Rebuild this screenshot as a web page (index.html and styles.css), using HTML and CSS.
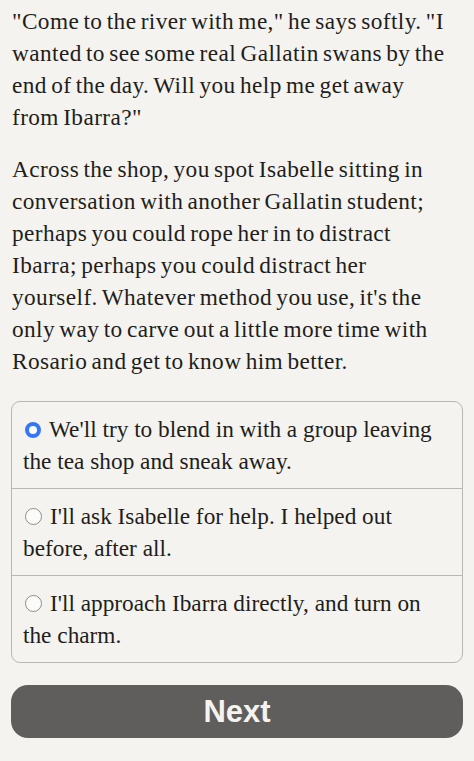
FILE: index.html
```html
<!DOCTYPE html>
<html lang="en">
<head>
    <meta charset="UTF-8">
    <meta name="viewport" content="width=device-width, initial-scale=1.0">
    <title>Gallatin</title>
    <link rel="stylesheet" href="styles.css">
</head>
<body>
    <div id="main">
        <!-- story text -->
        <div class="story">
            <p>"Come to the river with me," he says softly. "I wanted to see some real Gallatin swans by the end of the day. Will you help me get away from Ibarra?"</p>
            <p>Across the shop, you spot Isabelle sitting in conversation with another Gallatin student; perhaps you could rope her in to distract Ibarra; perhaps you could distract her yourself. Whatever method you use, it's the only way to carve out a little more time with Rosario and get to know him better.</p>
        </div>

        <!-- choices -->
        <ul class="choices">
            <li class="selected"><span class="radio"></span>We'll try to blend in with a group leaving the tea shop and sneak away.</li>
            <li><span class="radio"></span>I'll ask Isabelle for help. I helped out before, after all.</li>
            <li><span class="radio"></span>I'll approach Ibarra directly, and turn on the charm.</li>
        </ul>

        <button class="next">Next</button>
    </div>
</body>
</html>
```

FILE: styles.css
```css
*{
    margin: 0;
    padding: 0;
    list-style: none;
    box-sizing: border-box;
}

body{
    background-color: #f4f3ef;
    color: #1f1e1c;
    font-family: "Liberation Serif", "Times New Roman", serif;
}

#main{
    padding: 5px 11px 0;
}

.story{
    padding: 0 9px 0 1px;
}

.story p{
    font-size: 23.3px;
    line-height: 32px;
    letter-spacing: 0.4px;
    word-spacing: -1.9px;
    margin-bottom: 20px;
}

.choices{
    margin-top: 24px;
    border: 1px solid #b9b7b2;
    border-radius: 9px;
}

.choices>li{
    font-size: 23.3px;
    line-height: 32px;
    padding: 11px 12px 11px 11px;
    border-top: 1px solid #b9b7b2;
}

.choices>li:first-child{
    border-top: none;
}

.radio{
    display: inline-block;
    width: 17px;
    height: 17px;
    margin: 0 8px 0 2px;
    border: 1.5px solid #8d8c8a;
    border-radius: 50%;
    background-color: #fbfbfa;
    vertical-align: -1px;
}

.choices>li.selected .radio{
    width: 16px;
    height: 16px;
    border: 4.5px solid #3478f6;
    background-color: #fff;
}

.next{
    display: block;
    width: 100%;
    height: 53px;
    margin-top: 22px;
    border: none;
    border-radius: 17px;
    background-color: #5f5e5c;
    color: #f4f3ef;
    font-family: "Liberation Sans", Arial, sans-serif;
    font-weight: bold;
    font-size: 31px;
}
```
